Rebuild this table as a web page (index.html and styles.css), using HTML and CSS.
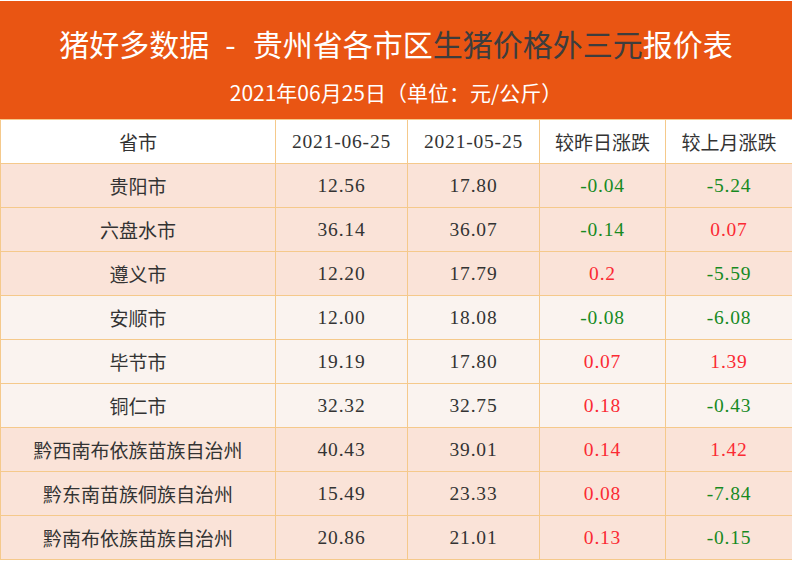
FILE: index.html
```html
<!DOCTYPE html>
<html lang="zh">
<head>
<meta charset="utf-8">
<link rel="stylesheet" href="styles.css">
</head>
<body>
<div class="page">
  <header class="banner">
    <div class="title">猪好多数据<span class="dash">-</span>贵州省各市区<span class="hl">生猪价格外三元</span>报价表</div>
    <div class="subtitle">2021年06月25日（单位：元/公斤）</div>
  </header>
  <table class="prices">
    <colgroup>
      <col class="c1"><col class="c2"><col class="c3"><col class="c4"><col class="c5">
    </colgroup>
    <thead>
      <tr><th>省市</th><th class="num">2021-06-25</th><th class="num">2021-05-25</th><th>较昨日涨跌</th><th>较上月涨跌</th></tr>
    </thead>
    <tbody>
      <tr class="dark"><td>贵阳市</td><td class="num">12.56</td><td class="num">17.80</td><td class="num down">-0.04</td><td class="num down">-5.24</td></tr>
      <tr class="dark"><td>六盘水市</td><td class="num">36.14</td><td class="num">36.07</td><td class="num down">-0.14</td><td class="num up">0.07</td></tr>
      <tr class="dark"><td>遵义市</td><td class="num">12.20</td><td class="num">17.79</td><td class="num up">0.2</td><td class="num down">-5.59</td></tr>
      <tr class="light"><td>安顺市</td><td class="num">12.00</td><td class="num">18.08</td><td class="num down">-0.08</td><td class="num down">-6.08</td></tr>
      <tr class="light"><td>毕节市</td><td class="num">19.19</td><td class="num">17.80</td><td class="num up">0.07</td><td class="num up">1.39</td></tr>
      <tr class="light"><td>铜仁市</td><td class="num">32.32</td><td class="num">32.75</td><td class="num up">0.18</td><td class="num down">-0.43</td></tr>
      <tr class="dark"><td>黔西南布依族苗族自治州</td><td class="num">40.43</td><td class="num">39.01</td><td class="num up">0.14</td><td class="num up">1.42</td></tr>
      <tr class="dark"><td>黔东南苗族侗族自治州</td><td class="num">15.49</td><td class="num">23.33</td><td class="num up">0.08</td><td class="num down">-7.84</td></tr>
      <tr class="dark"><td>黔南布依族苗族自治州</td><td class="num">20.86</td><td class="num">21.01</td><td class="num up">0.13</td><td class="num down">-0.15</td></tr>
    </tbody>
  </table>
</div>
</body>
</html>
```
FILE: styles.css
```css
html, body {
  margin: 0;
  padding: 0;
  background: #ffffff;
}
body {
  font-family: "Noto Sans CJK SC", "Noto Sans", sans-serif;
  color: #333333;
  text-spacing-trim: space-all;
}
.page {
  width: 792px;
  padding-top: 1px;
}
.banner {
  height: 118px;
  background: #e95513;
  color: #ffffff;
  display: flex;
  flex-direction: column;
  align-items: center;
  padding-top: 22px;
  box-sizing: border-box;
}
.title {
  font-size: 30px;
  line-height: 40px;
  height: 40px;
  white-space: nowrap;
}
.title .dash {
  display: inline-block;
  margin: 0 17px 0 16px;
}
.title .hl {
  color: #3d3d3d;
}
.subtitle {
  margin-top: 14px;
  font-size: 21px;
  line-height: 30px;
  white-space: nowrap;
}
.prices {
  width: 792px;
  table-layout: fixed;
  border-collapse: collapse;
  font-size: 19px;
}
.c1 { width: 275px; }
.c2 { width: 132px; }
.c3 { width: 132px; }
.c4 { width: 126px; }
.c5 { width: 127px; }
.prices th, .prices td {
  border: 1px solid #f5c98b;
  height: 43px;
  padding: 0;
  text-align: center;
  vertical-align: middle;
  font-weight: 400;
  white-space: nowrap;
}
.prices thead th {
  background: #ffffff;
}
.prices .num {
  font-family: "Liberation Serif", serif;
  font-size: 19.5px;
  letter-spacing: 0.8px;
}
.prices tr.dark td {
  background: #fae3d8;
}
.prices tr.light td {
  background: #faf3ef;
}
.prices .down {
  color: #178a1f;
}
.prices .up {
  color: #fb2a33;
}
```
